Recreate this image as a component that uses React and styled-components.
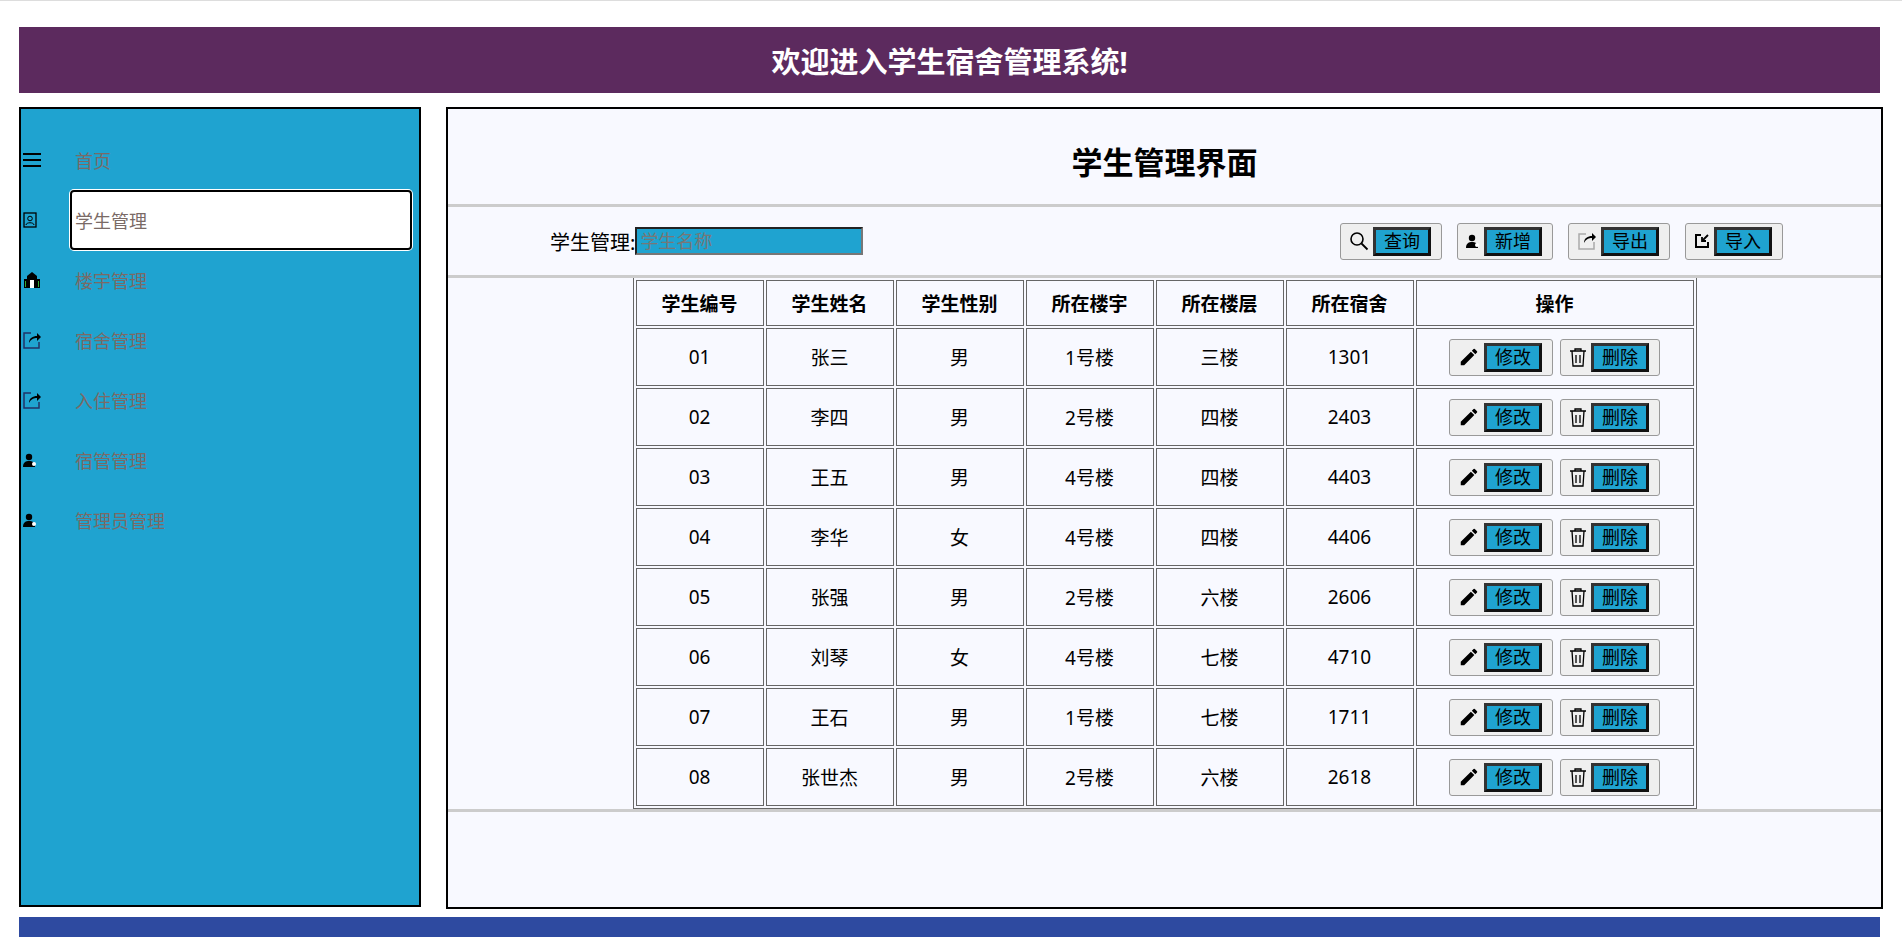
import React from "react";
import styled, { createGlobalStyle } from "styled-components";

const G = createGlobalStyle`
  html,body{margin:0;padding:0;background:#fff;}
  body{font-family:"Noto Sans","Noto Sans CJK SC",sans-serif;}
  *{box-sizing:border-box;}
`;
const Page = styled.div`
  width:1902px;height:937px;overflow:hidden;border-top:1px solid #ddd;
  display:flex;flex-direction:column;padding:26px 0 0 19px;
`;
const Header = styled.div`
  width:1861px;height:66px;background:#5c2a5e;color:#fff;display:flex;align-items:center;justify-content:center;
  font-size:29px;font-weight:bold;
`;
const Body = styled.div`display:flex;gap:25px;margin-top:14px;height:802px;`;
const Side = styled.div`
  width:402px;height:800px;background:#1fa3d0;border:2px solid #000;padding-top:21px;
  display:flex;flex-direction:column;
`;
const Item = styled.div`
  height:60px;display:flex;align-items:center;padding-left:1px;
`;
const Ico = styled.div`width:48px;display:flex;align-items:center;padding-left:1px;`;
const Label = styled.div`
  flex:0 0 342px;height:60px;display:flex;align-items:center;padding-left:5px;font-size:18px;color:#7a6a66;
  ${p=>p.$active&&`background:#fff;border:2px solid #000;border-radius:4px;box-shadow:0 0 0 1px #fff;padding-left:3px;`}
`;
const Main = styled.div`
  width:1437px;height:802px;background:#f8f9ff;border:2px solid #000;display:flex;flex-direction:column;
`;
const Title = styled.div`height:95px;display:flex;align-items:center;justify-content:center;font-size:31px;font-weight:bold;padding-top:8px;`;
const Toolbar = styled.div`
  height:74px;border-top:3px solid #ccc;border-bottom:3px solid #ccc;display:flex;align-items:center;padding:0 98px 0 102px;
`;
const Lbl = styled.span`font-size:20px;`;
const Input = styled.input`
  width:228px;height:28px;background:#1fa3d0;border:2px solid;border-color:#222 #777 #777 #222;font-size:18px;padding:0 3px;
  font-family:inherit;
  &::placeholder{color:#777;}
`;
const Btns = styled.div`margin-left:auto;display:flex;gap:15px;`;
const Btn = styled.button`
  height:37px;padding:0 10px 0 8px;display:flex;align-items:center;gap:4px;background:#efefef;border:1px solid #999;border-radius:3px;font-family:inherit;
`;
const Blue = styled.span`
  background:#1fa3d0;border:3px solid;border-color:#333 #111 #111 #333;padding:0 8px;font-size:18px;line-height:23px;color:#000;
`;
const TableWrap = styled.div`border-bottom:3px solid #ccc;display:flex;justify-content:center;padding-top:0;`;
const Table = styled.table`
  width:1064px;border-collapse:separate;border-spacing:2px;border:1px solid #666;border-top:none;font-size:19px;
  th,td{border:1px solid #666;text-align:center;}
  th{height:46px;font-weight:bold;}
  td{height:58px;}
`;
const Ops = styled.div`display:flex;justify-content:center;gap:7px;`;
const Footer = styled.div`margin-top:8px;height:20px;width:1861px;background:#2e4aa0;`;

const Menu = ()=> <svg width="18" height="16" viewBox="0 0 18 16"><path d="M0 2h18M0 8h18M0 14h18" stroke="#000" strokeWidth="2"/></svg>;
const Card = ()=> <svg width="14" height="16" viewBox="0 0 14 16"><rect x="1" y="1" width="12" height="14" fill="none" stroke="#000" strokeWidth="1.3"/><circle cx="7" cy="6.5" r="2.3" fill="none" stroke="#000"/><path d="M3 13c0-3 8-3 8 0" fill="none" stroke="#000"/></svg>;
const Bld = ()=> <svg width="18" height="18" viewBox="0 0 18 18"><path d="M1 17V8h3V5l5-4 5 4v3h3v9z" fill="#000"/><rect x="7" y="9" width="4" height="8" fill="#fff"/><rect x="2" y="10" width="1" height="6" fill="#3a3"/><rect x="15" y="10" width="1" height="6" fill="#3a3"/></svg>;
const Share = ()=> <svg width="18" height="18" viewBox="0 0 18 18"><path d="M8 2H1v15h15v-6" fill="none" stroke="#236" strokeWidth="1.5"/><path d="M6 12c0-5 4-7 8-7V2l4 4-4 4V7c-3 0-6 1-8 5z" fill="#000"/></svg>;
const Person = ()=> <svg width="14" height="14" viewBox="0 0 14 14"><circle cx="6" cy="4" r="3.2" fill="#000"/><path d="M0 14c0-5 3-6 6-6s6 1 6 6z" fill="#000"/><circle cx="11" cy="11" r="2" fill="#fff"/></svg>;
const Search = ()=> <svg width="20" height="20" viewBox="0 0 20 20"><circle cx="8" cy="8" r="6" fill="none" stroke="#000" strokeWidth="1.6"/><path d="M12.5 12.5l6 6" stroke="#000" strokeWidth="1.8"/></svg>;
const ShareG = ()=> <svg width="20" height="20" viewBox="0 0 20 20"><path d="M9 3H2v15h15v-7" fill="none" stroke="#aaa" strokeWidth="1.5"/><path d="M7 12c0-5 4-7 8-7V2l4 4-4 4V7c-3 0-6 1-8 5z" fill="#000"/></svg>;
const Imp = ()=> <svg width="16" height="16" viewBox="0 0 16 16"><path d="M7 2H2v12h12V9" fill="none" stroke="#000" strokeWidth="2"/><path d="M14 2L8 8M8 4v4h4" fill="none" stroke="#000" strokeWidth="1.8"/></svg>;
const Pen = ()=> <svg width="22" height="22" viewBox="0 0 24 24"><path d="M3 17.25V21h3.75L17.81 9.94l-3.75-3.75zM20.71 7.04a1 1 0 000-1.41l-2.34-2.34a1 1 0 00-1.41 0l-1.83 1.83 3.75 3.75z" fill="#000"/></svg>;
const Trash = ()=> <svg width="18" height="20" viewBox="0 0 18 20"><path d="M1 4h16M6 4V2h6v2M3 4l1 15h10l1-15M7 8v8M11 8v8" fill="none" stroke="#000" strokeWidth="1.3"/></svg>;

const nav=[[<Menu/>,"首页"],[<Card/>,"学生管理",true],[<Bld/>,"楼宇管理"],[<Share/>,"宿舍管理"],[<Share/>,"入住管理"],[<Person/>,"宿管管理"],[<Person/>,"管理员管理"]];
const rows=[["01","张三","男","1号楼","三楼","1301"],["02","李四","男","2号楼","四楼","2403"],["03","王五","男","4号楼","四楼","4403"],["04","李华","女","4号楼","四楼","4406"],["05","张强","男","2号楼","六楼","2606"],["06","刘琴","女","4号楼","七楼","4710"],["07","王石","男","1号楼","七楼","1711"],["08","张世杰","男","2号楼","六楼","2618"]];
const heads=["学生编号","学生姓名","学生性别","所在楼宇","所在楼层","所在宿舍"];

export default function App(){
  return <Page><G/>
    <Header>欢迎进入学生宿舍管理系统!</Header>
    <Body>
      <Side>{nav.map(([i,t,a])=><Item key={t}><Ico>{i}</Ico><Label $active={a}>{t}</Label></Item>)}</Side>
      <Main>
        <Title>学生管理界面</Title>
        <Toolbar>
          <Lbl>学生管理:</Lbl><Input placeholder="学生名称"/>
          <Btns>
            <Btn><Search/><Blue>查询</Blue></Btn>
            <Btn><Person/><Blue>新增</Blue></Btn>
            <Btn><ShareG/><Blue>导出</Blue></Btn>
            <Btn><Imp/><Blue>导入</Blue></Btn>
          </Btns>
        </Toolbar>
        <TableWrap>
          <Table>
            <colgroup>{heads.map(h=><col key={h} style={{width:128}}/>)}<col/></colgroup>
            <thead><tr>{heads.map(h=><th key={h}>{h}</th>)}<th>操作</th></tr></thead>
            <tbody>{rows.map(r=><tr key={r[0]}>{r.map((c,i)=><td key={i}>{c}</td>)}
              <td><Ops><Btn><Pen/><Blue>修改</Blue></Btn><Btn><Trash/><Blue>删除</Blue></Btn></Ops></td></tr>)}</tbody>
          </Table>
        </TableWrap>
      </Main>
    </Body>
    <Footer/>
  </Page>;
}
